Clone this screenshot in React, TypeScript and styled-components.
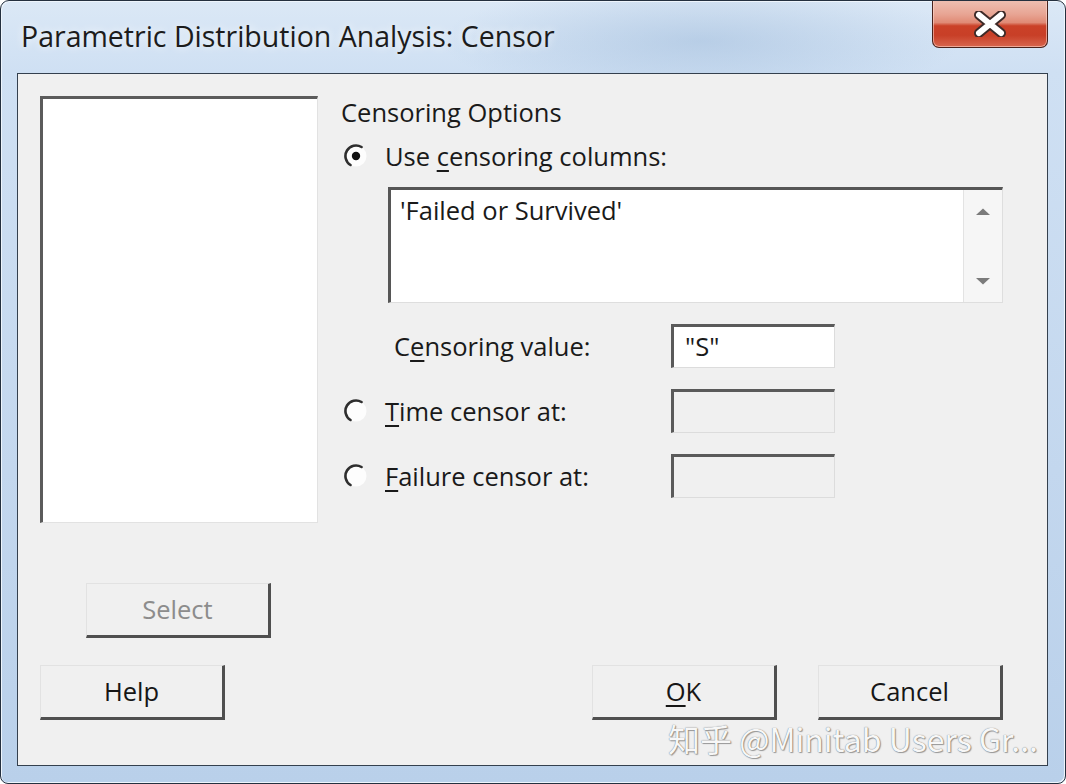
import styled, { createGlobalStyle } from "styled-components";

const GlobalStyle = createGlobalStyle`
  html, body {
    margin: 0;
    padding: 0;
    background: #ffffff;
  }
  body {
    font-family: "Open Sans", "Noto Sans", sans-serif;
    color: #1a1a1a;
  }
`;

// ── window chrome ─────────────────────────────────────────
const Window = styled.div`
  position: relative;
  width: 1066px;
  height: 784px;
  box-sizing: border-box;
  border: 1px solid #24303f;
  border-radius: 9px 9px 8px 8px;
  background:
    radial-gradient(ellipse 260px 60px at 700px 40px, rgba(150, 180, 214, 0.45), transparent),
    linear-gradient(180deg, #dbe8f6 0%, #cfe0f3 9%, #c3d7ee 60%, #b9d0ea 100%);
  box-shadow: inset 1px 1px 0 #eef5fc, inset -1px -1px 0 #eef5fc;
  display: flex;
  flex-direction: column;
  overflow: hidden;
`;

const TitleBar = styled.div`
  height: 72px;
  flex-shrink: 0;
  display: flex;
  align-items: flex-start;
  padding: 0 17px 0 20px;
`;

const Title = styled.h1`
  flex: 1;
  margin: 0;
  padding-top: 15px;
  font: 400 28.5px/40px "Open Sans", "Noto Sans", sans-serif;
  color: #1c1c1c;
  text-shadow: 0 0 8px rgba(255, 255, 255, 0.9);
`;

const CloseButton = styled.button`
  width: 116px;
  height: 48px;
  margin-top: -1px;
  padding: 0;
  border: 1px solid #4b221b;
  border-top: none;
  border-radius: 0 0 7px 7px;
  background: linear-gradient(
    180deg,
    #eec0b3 0%,
    #e8a594 30%,
    #e08a75 48%,
    #cb4128 55%,
    #c83f27 75%,
    #d8664e 100%
  );
  box-shadow: inset 0 0 0 1px rgba(255, 220, 210, 0.55);
  display: flex;
  align-items: center;
  justify-content: center;
`;

const Client = styled.div`
  flex: 1;
  margin: 0 17px 17px 16px;
  border: 1px solid #34404e;
  background: #f0f0f0;
  padding: 22px 44px 0 22px;
  display: flex;
  flex-direction: column;
`;

// ── dialog body ───────────────────────────────────────────
const TopArea = styled.div`
  display: flex;
  gap: 23px;
`;

const LeftColumn = styled.div`
  width: 278px;
  display: flex;
  flex-direction: column;
  align-items: flex-start;
`;

const ListBox = styled.div`
  width: 278px;
  height: 427px;
  box-sizing: border-box;
  background: #ffffff;
  border-top: 3px solid #5b5b5b;
  border-left: 3px solid #5b5b5b;
  border-right: 1px solid #e2e2e2;
  border-bottom: 1px solid #e2e2e2;
`;

const Button = styled.button<{ $disabled?: boolean }>`
  width: 185px;
  height: 55px;
  box-sizing: border-box;
  padding: 0;
  background: #f0f0f0;
  border-top: 1px solid #e2e2e2;
  border-left: 1px solid #e2e2e2;
  border-right: 3px solid #4f4f4f;
  border-bottom: 3px solid #4f4f4f;
  font: 400 25.5px/1 "Open Sans", "Noto Sans", sans-serif;
  color: ${({ $disabled }) => ($disabled ? "#8c8c8c" : "#161616")};
`;

const SelectButton = styled(Button)`
  margin: 60px 0 0 46px;
`;

const RightColumn = styled.div`
  width: 662px;
  display: flex;
  flex-direction: column;
  font-size: 25.5px;
  line-height: 32px;
`;

const GroupHeading = styled.div`
  color: #1a1a1a;
`;

const RadioRow = styled.div`
  display: flex;
  align-items: center;
  gap: 17px;
  padding-left: 3px;
`;

const TopRadioRow = styled(RadioRow)`
  margin-top: 12px;
`;

const Key = styled.span`
  text-decoration: underline;
  text-underline-offset: 4px;
  text-decoration-thickness: 2px;
`;

const ColumnsBox = styled.div`
  margin: 15px 0 0 47px;
  width: 615px;
  height: 116px;
  box-sizing: border-box;
  background: #ffffff;
  border-top: 3px solid #565656;
  border-left: 3px solid #565656;
  border-right: 1px solid #dedede;
  border-bottom: 1px solid #dedede;
  display: flex;
`;

const ColumnsText = styled.div`
  flex: 1;
  padding: 4px 9px;
`;

const ScrollBar = styled.div`
  width: 38px;
  background: #f6f6f6;
  border-left: 1px solid #e3e3e3;
  display: flex;
  flex-direction: column;
  justify-content: space-between;
  align-items: center;
  padding: 17px 0 16px;
`;

const FieldGrid = styled.div`
  margin-top: 21px;
  display: grid;
  grid-template-columns: 330px 164px;
  grid-auto-rows: 44px;
  row-gap: 21px;
  align-items: center;
`;

const FieldLabel = styled.div`
  padding-left: 53px;
`;

const ValueBox = styled.div<{ $enabled?: boolean }>`
  height: 44px;
  box-sizing: border-box;
  background: ${({ $enabled }) => ($enabled ? "#ffffff" : "#f0f0f0")};
  border-top: 3px solid #5a5a5a;
  border-left: 3px solid #5a5a5a;
  border-right: 1px solid #dcdcdc;
  border-bottom: 1px solid #dcdcdc;
  padding: 0 11px;
  line-height: 38px;
`;

const ButtonRow = styled.div`
  margin-top: 27px;
  display: flex;
  align-items: center;
  gap: 41px;
`;

const Spacer = styled.div`
  flex: 1;
`;

const Watermark = styled.div`
  position: absolute;
  left: 667px;
  top: 715px;
  font: 400 32px/44px "Noto Sans CJK SC", "Noto Sans", sans-serif;
  color: #f7f7f7;
  white-space: nowrap;
  text-shadow:
    0 0 1px rgba(60, 60, 60, 0.8),
    1px 1px 1px rgba(80, 80, 80, 0.5);
`;

// ── drawings ──────────────────────────────────────────────
function Radio({ checked }: { checked?: boolean }) {
  return (
    <svg width="24" height="24" viewBox="0 0 24 24">
      <circle cx="12" cy="12" r="10.5" fill="#fdfdfd" />
      <path
        d="M17.5 3 A10.5 10.5 0 0 0 6.5 21"
        fill="none"
        stroke="#2e2e2e"
        strokeWidth="2.6"
        strokeLinecap="round"
      />
      {checked && <circle cx="12" cy="12" r="4.2" fill="#111" />}
    </svg>
  );
}

function Arrow({ up }: { up?: boolean }) {
  return (
    <svg width="16" height="9" viewBox="0 0 16 9">
      <path
        d={up ? "M1 8 L8 1.5 L15 8 Z" : "M1 1 L8 7.5 L15 1 Z"}
        fill="#7b7b7b"
      />
    </svg>
  );
}

function CloseGlyph() {
  return (
    <svg width="34" height="26" viewBox="0 0 34 26">
      <path d="M6 4 L28 22 M28 4 L6 22" stroke="#3d2a28" strokeWidth="10" strokeLinecap="round" />
      <path d="M6 4 L28 22 M28 4 L6 22" stroke="#ffffff" strokeWidth="6" strokeLinecap="round" />
    </svg>
  );
}

export default function App() {
  return (
    <>
      <GlobalStyle />
      <Window>
        <TitleBar>
          <Title>Parametric Distribution Analysis: Censor</Title>
          <CloseButton aria-label="Close">
            <CloseGlyph />
          </CloseButton>
        </TitleBar>

        <Client>
          <TopArea>
            <LeftColumn>
              <ListBox />
              <SelectButton $disabled>Select</SelectButton>
            </LeftColumn>

            <RightColumn>
              <GroupHeading>Censoring Options</GroupHeading>
              <TopRadioRow>
                <Radio checked />
                <span>
                  Use <Key>c</Key>ensoring columns:
                </span>
              </TopRadioRow>
              <ColumnsBox>
                <ColumnsText>'Failed or Survived'</ColumnsText>
                <ScrollBar>
                  <Arrow up />
                  <Arrow />
                </ScrollBar>
              </ColumnsBox>

              <FieldGrid>
                <FieldLabel>
                  C<Key>e</Key>nsoring value:
                </FieldLabel>
                <ValueBox $enabled>"S"</ValueBox>

                <RadioRow>
                  <Radio />
                  <span>
                    <Key>T</Key>ime censor at:
                  </span>
                </RadioRow>
                <ValueBox />

                <RadioRow>
                  <Radio />
                  <span>
                    <Key>F</Key>ailure censor at:
                  </span>
                </RadioRow>
                <ValueBox />
              </FieldGrid>
            </RightColumn>
          </TopArea>

          <ButtonRow>
            <Button>Help</Button>
            <Spacer />
            <Button>
              <Key>O</Key>K
            </Button>
            <Button>Cancel</Button>
          </ButtonRow>
        </Client>

        <Watermark>知乎 @Minitab Users Gr...</Watermark>
      </Window>
    </>
  );
}
